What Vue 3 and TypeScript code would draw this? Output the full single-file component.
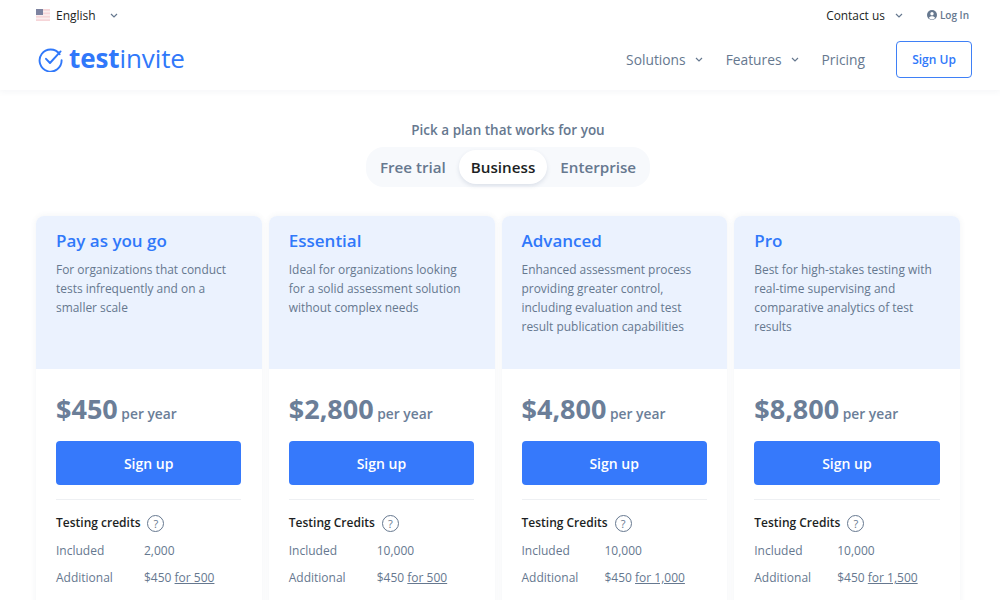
<script setup lang="ts">
interface Plan {
  name: string
  desc: string
  price: string
  creditsLabel: string
  included: string
  extraPrice: string
  extraFor: string
  compact: boolean
}

const tabs = ['Free trial', 'Business', 'Enterprise']

const plans: Plan[] = [
  {
    name: 'Pay as you go',
    desc: 'For organizations that conduct tests infrequently and on a smaller scale',
    price: '$450',
    creditsLabel: 'Testing credits',
    included: '2,000',
    extraPrice: '$450',
    extraFor: 'for 500',
    compact: false
  },
  {
    name: 'Essential',
    desc: 'Ideal for organizations looking for a solid assessment solution without complex needs',
    price: '$2,800',
    creditsLabel: 'Testing Credits',
    included: '10,000',
    extraPrice: '$450',
    extraFor: 'for 500',
    compact: false
  },
  {
    name: 'Advanced',
    desc: 'Enhanced assessment process providing greater control, including evaluation and test result publication capabilities',
    price: '$4,800',
    creditsLabel: 'Testing Credits',
    included: '10,000',
    extraPrice: '$450',
    extraFor: 'for 1,000',
    compact: true
  },
  {
    name: 'Pro',
    desc: 'Best for high-stakes testing with real-time supervising and comparative analytics of test results',
    price: '$8,800',
    creditsLabel: 'Testing Credits',
    included: '10,000',
    extraPrice: '$450',
    extraFor: 'for 1,500',
    compact: true
  }
]
</script>

<template>
  <div class="page">
    <header class="header">
      <div class="topbar">
        <div class="lang">
          <svg class="flag" width="14" height="12" viewBox="0 0 14 12">
            <rect width="14" height="12" fill="#f6d5d8" />
            <rect y="1.8" width="14" height="1.7" fill="#fbeeee" />
            <rect y="5.2" width="14" height="1.7" fill="#fbeeee" />
            <rect y="8.6" width="14" height="1.7" fill="#fbeeee" />
            <rect width="7" height="6" fill="#7d83a0" />
          </svg>
          <span>English</span>
          <svg class="chev chev-lang" width="8" height="5" viewBox="0 0 8 5"><path d="M1 1l3 3 3-3" /></svg>
        </div>
        <div class="top-right">
          <span class="contact">Contact us</span>
          <svg class="chev" width="8" height="5" viewBox="0 0 8 5"><path d="M1 1l3 3 3-3" /></svg>
          <span class="login">
            <svg width="10" height="10" viewBox="0 0 10 10">
              <circle cx="5" cy="5" r="5" fill="#66788f" />
              <circle cx="5" cy="3.8" r="1.7" fill="#fff" />
              <path d="M1.9 8.1C2.4 6.7 3.6 6.2 5 6.2s2.6.5 3.1 1.9A4.3 4.3 0 0 1 5 9.4a4.3 4.3 0 0 1-3.1-1.3z" fill="#fff" />
            </svg>
            Log In
          </span>
        </div>
      </div>
      <div class="navbar">
        <div class="logo">
          <svg width="25" height="25" viewBox="0 0 25 25" fill="none" stroke="#3078fa" stroke-width="1.9" stroke-linecap="round" stroke-linejoin="round">
            <path d="M21.6 7.2A11 11 0 1 0 23.6 13.2" />
            <path d="M8 11.8l4 4.2 10.6-11.6" />
          </svg>
          <span class="logo-text"><b>test</b>invite</span>
        </div>
        <nav class="nav">
          <span class="nav-item">Solutions
            <svg class="chev" width="8" height="5" viewBox="0 0 8 5"><path d="M1 1l3 3 3-3" /></svg>
          </span>
          <span class="nav-item">Features
            <svg class="chev" width="8" height="5" viewBox="0 0 8 5"><path d="M1 1l3 3 3-3" /></svg>
          </span>
          <span class="nav-item">Pricing</span>
          <a class="signup-outline">Sign Up</a>
        </nav>
      </div>
    </header>

    <main class="main">
      <div class="chooser">
        <p class="pick">Pick a plan that works for you</p>
        <div class="tabs">
          <span v-for="tab in tabs" :key="tab" class="tab" :class="{ active: tab === 'Business' }">{{ tab }}</span>
        </div>
      </div>

      <div class="plans">
        <section v-for="plan in plans" :key="plan.name" class="plan">
          <div class="plan-head">
            <h2>{{ plan.name }}</h2>
            <p>{{ plan.desc }}</p>
          </div>
          <div class="plan-body" :class="{ compact: plan.compact }">
            <div class="price"><strong>{{ plan.price }}</strong> per year</div>
            <button class="signup">Sign up</button>
            <div class="credits">
              <span>{{ plan.creditsLabel }}</span>
              <i class="help">?</i>
            </div>
            <div class="row"><span class="key">Included</span><span>{{ plan.included }}</span></div>
            <div class="row"><span class="key">Additional</span><span>{{ plan.extraPrice }} <u>{{ plan.extraFor }}</u></span></div>
          </div>
        </section>
      </div>
    </main>
  </div>
</template>

<style>
html,
body {
  margin: 0;
  overflow: hidden;
  background: #fff;
}
</style>

<style scoped>
.page {
  height: 600px;
  overflow: hidden;
  font-family: "Open Sans", "Liberation Sans", sans-serif;
  color: #66788f;
}

.header {
  height: 90px;
  box-sizing: border-box;
  padding: 0 28px 0 36px;
  box-shadow: 0 2px 6px rgba(60, 80, 120, 0.05);
}

.topbar {
  display: flex;
  justify-content: space-between;
  align-items: center;
  height: 30px;
  font-size: 12px;
  color: #1c1f24;
}

.lang {
  display: flex;
  align-items: center;
  gap: 6px;
}

.chev {
  fill: none;
  stroke: #66788f;
  stroke-width: 1.2;
}

.chev-lang {
  margin-left: 8px;
}

.top-right {
  display: flex;
  align-items: center;
}

.contact {
  margin-right: 10px;
  font-size: 11.9px;
}

.login {
  display: flex;
  align-items: center;
  gap: 3px;
  margin-left: 24px;
  margin-right: 3px;
  font-size: 10px;
  font-weight: 600;
  color: #66788f;
}

.navbar {
  display: flex;
  justify-content: space-between;
  align-items: center;
  height: 58px;
}

.logo {
  display: flex;
  align-items: center;
  gap: 6px;
  margin-left: 2px;
}

.logo-text {
  margin-top: -2px;
  font-size: 26px;
  line-height: 1;
  color: #3078fa;
  font-weight: 400;
  letter-spacing: -0.1px;
}

.logo-text b {
  font-weight: 700;
}

.nav {
  display: flex;
  align-items: center;
  font-size: 13.8px;
}

.nav-item {
  display: flex;
  align-items: center;
  gap: 9px;
  margin-right: 23px;
}

.signup-outline {
  box-sizing: border-box;
  width: 76px;
  height: 37px;
  margin-left: 8px;
  display: flex;
  align-items: center;
  justify-content: center;
  border: 1px solid #3f80f6;
  border-radius: 4px;
  color: #3078fa;
  font-size: 12px;
  font-weight: 600;
}

.main {
  padding: 0 40px 0 36px;
}

.chooser {
  margin-left: 20px;
  padding-top: 31px;
}

.pick {
  margin: 0;
  text-align: center;
  font-size: 13.5px;
  line-height: 18px;
  font-weight: 600;
  color: #66788f;
}

.tabs {
  display: flex;
  width: fit-content;
  margin: 8px auto 0;
  padding: 3px 1px;
  background: #f7f9fc;
  border-radius: 18px;
}

.tab {
  padding: 0 13px;
  height: 34px;
  line-height: 34px;
  border-radius: 17px;
  font-size: 15.2px;
  font-weight: 600;
  color: #66788f;
}

.tab.active {
  background: #fff;
  color: #1c1f24;
  padding: 0 12px;
  box-shadow: 0 2px 4px rgba(60, 80, 120, 0.14);
}

.plans {
  display: grid;
  grid-template-columns: repeat(4, 1fr);
  gap: 7px;
  margin-top: 29px;
}

.plan {
  box-shadow: 0 0 6px rgba(60, 80, 120, 0.07);
  border-radius: 8px 8px 0 0;
}

.plan-head {
  box-sizing: border-box;
  height: 153px;
  padding: 13px 20px 0;
  background: #ebf2fe;
  border-radius: 8px 8px 0 0;
}

.plan-head h2 {
  margin: 0;
  font-size: 17px;
  line-height: 24px;
  font-weight: 600;
  color: #3078fa;
}

.plan-head p {
  margin: 7px 0 0;
  font-size: 11.95px;
  line-height: 19px;
  color: #66788f;
}

.plan-body {
  height: 260px;
  padding: 22px 20.5px 0 20px;
}

.price {
  font-size: 13.8px;
  line-height: 36px;
  font-weight: 600;
  color: #6b7e98;
}

.price strong {
  font-size: 27px;
  font-weight: 700;
}

.signup {
  display: block;
  width: 100%;
  height: 44px;
  margin-top: 9px;
  border: 0;
  border-radius: 4px;
  background: #3679fb;
  color: #fff;
  font-family: inherit;
  font-size: 14px;
  font-weight: 600;
}

.credits {
  display: flex;
  align-items: center;
  gap: 7px;
  margin-top: 14px;
  padding-top: 14px;
  border-top: 1px solid #eef0f3;
  font-size: 12px;
  line-height: 18px;
  font-weight: 600;
  color: #1c1f24;
}

.help {
  box-sizing: border-box;
  width: 17px;
  height: 17px;
  border: 1px solid #66788f;
  border-radius: 50%;
  font-style: normal;
  font-size: 11px;
  font-weight: 400;
  line-height: 15px;
  text-align: center;
  color: #66788f;
}

.row {
  display: flex;
  margin-top: 10px;
  font-size: 12px;
  line-height: 18px;
}

.row + .row {
  margin-top: 9px;
}

.key {
  width: 88px;
}

.compact .key {
  width: 83px;
}
</style>
